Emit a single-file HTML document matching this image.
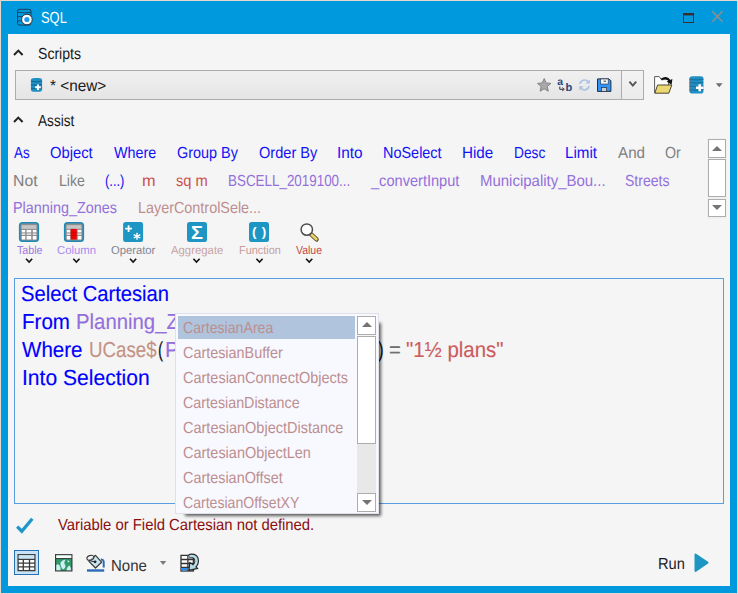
<!DOCTYPE html>
<html><head><meta charset="utf-8"><title>SQL</title>
<style>
html,body{margin:0;padding:0}
body{width:738px;height:594px;overflow:hidden;background:#fff;position:relative;font-family:"Liberation Sans",sans-serif}
.a{position:absolute}
#frame{left:1px;top:1px;width:736px;height:592px;background:#0099dd}
#content{left:8px;top:34px;width:722px;height:552px;background:#f5f5f5}
.t{position:absolute;white-space:pre;transform-origin:0 0;display:block;text-rendering:geometricPrecision}
svg{position:absolute;overflow:visible}
#combo{left:15px;top:70px;width:605px;height:28px;border:1px solid #acacac;background:linear-gradient(#f0f0f0,#e5e5e5)}
#combobtn{left:621px;top:70px;width:21px;height:28px;border:1px solid #acacac;background:linear-gradient(#f3f3f3,#ebebeb)}
.sb{background:#fff;border:1px solid #adadad;box-sizing:border-box}
#editor{left:14px;top:278px;width:708px;height:224px;border:1px solid #5a9de0;background:#f5f5f5}
#popup{left:175px;top:313px;width:204px;height:201px;box-sizing:border-box;border:1px solid #e0e0e8;background:#f8f8ff;box-shadow:6px 6px 3px -4px rgba(0,0,0,.62)}
#sel{left:178px;top:316px;width:177px;height:23px;background:#b0c4de}
#ptrack{left:357px;top:335px;width:19px;height:158px;background:#e8e8e8}
#btn1{left:14px;top:550px;width:23px;height:23px;border:1px solid #2672b4;background:#c9e2f5}
</style></head><body>
<div class="a" style="left:0;top:0;width:738px;height:594px;background:#e6d7cf"></div>
<div class="a" id="frame"></div>
<div class="a" id="content"></div>

<!-- title bar icons -->
<svg id="ic-title" style="left:16px;top:8px" width="18" height="18" viewBox="0 0 18 18"></svg>
<svg id="ic-max" style="left:683px;top:13px" width="12" height="11" viewBox="0 0 12 11"><rect x="0.5" y="1" width="10" height="8.5" fill="none" stroke="#3a2e2c" stroke-width="1"/><rect x="0" y="0" width="11" height="2.4" fill="#3a2e2c"/></svg>
<svg id="ic-close" style="left:712px;top:11px" width="11" height="11" viewBox="0 0 11 11"><path d="M0.3 0.3L10.5 10.7M10.5 0.3L0.3 10.7" stroke="#8e8e8e" stroke-width="1.6" fill="none"/></svg>

<!-- expander chevrons -->
<svg style="left:13px;top:49px" width="11" height="7" viewBox="0 0 11 7"><path d="M1 6L5.3 1.6L9.6 6" fill="none" stroke="#222" stroke-width="2"/></svg>
<svg style="left:13px;top:116px" width="11" height="7" viewBox="0 0 11 7"><path d="M1 6L5.3 1.6L9.6 6" fill="none" stroke="#222" stroke-width="2"/></svg>

<div class="a" id="combo"></div>
<div class="a" id="combobtn"></div>
<svg style="left:629px;top:81px" width="8" height="6" viewBox="0 0 8 6"><path d="M0.4 0.6L3.8 4.6L7.2 0.6" fill="none" stroke="#555" stroke-width="1.9"/></svg>

<!-- assist scrollbar -->
<div class="a" style="left:707px;top:138px;width:20px;height:81px;background:#f0f0f0"></div>
<div class="a sb" style="left:708px;top:139px;width:18px;height:19px"></div>
<div class="a sb" style="left:708px;top:159px;width:18px;height:38px"></div>
<div class="a sb" style="left:708px;top:199px;width:18px;height:18px"></div>
<svg style="left:712px;top:146px" width="10" height="5" viewBox="0 0 10 5"><path d="M0 5L5 0L10 5Z" fill="#747474"/></svg>
<svg style="left:712px;top:205px" width="10" height="5" viewBox="0 0 10 5"><path d="M0 0L5 5L10 0Z" fill="#747474"/></svg>

<!-- editor -->
<div class="a" id="editor"></div>
<span class="t" style="left:21.20px;top:280px;font-size:21.8px;line-height:28px;color:#0000ff;transform:scaleX(0.9257);-webkit-text-stroke:0.15px">Select Cartesian</span>
<span class="t" style="left:22.06px;top:308px;font-size:21.8px;line-height:28px;color:#0000ff;transform:scaleX(0.9426);-webkit-text-stroke:0.15px">From</span>
<span class="t" style="left:75.97px;top:308px;font-size:21.8px;line-height:28px;color:#9370db;transform:scaleX(0.9327);-webkit-text-stroke:0.15px">Planning_Zones</span>
<span class="t" style="left:21.90px;top:336px;font-size:21.8px;line-height:28px;color:#0000ff;transform:scaleX(0.9426);-webkit-text-stroke:0.15px">Where</span>
<span class="t" style="left:88.74px;top:336px;font-size:21.8px;line-height:28px;color:#c49284;transform:scaleX(0.8580);-webkit-text-stroke:0.15px">UCase$</span>
<span class="t" style="left:157.70px;top:336px;font-size:21.8px;line-height:28px;color:#111111;transform:scaleX(0.7000);-webkit-text-stroke:0.15px">(</span>
<span class="t" style="left:165.45px;top:336px;font-size:21.8px;line-height:28px;color:#9370db;transform:scaleX(0.9546);-webkit-text-stroke:0.15px">Planning_Zones.Name</span>
<span class="t" style="left:378.30px;top:336px;font-size:21.8px;line-height:28px;color:#111111;transform:scaleX(0.7833);-webkit-text-stroke:0.15px">)</span>
<span class="t" style="left:388.97px;top:336px;font-size:21.8px;line-height:28px;color:#707070;transform:scaleX(0.9273);-webkit-text-stroke:0.15px">=</span>
<span class="t" style="left:406.20px;top:336px;font-size:21.8px;line-height:28px;color:#cd5c5c;transform:scaleX(0.9389);-webkit-text-stroke:0.15px">&quot;1½ plans&quot;</span>
<span class="t" style="left:21.57px;top:364px;font-size:21.8px;line-height:28px;color:#0000ff;transform:scaleX(0.9662);-webkit-text-stroke:0.15px">Into Selection</span>

<!-- popup -->
<div class="a" id="popup"></div>
<div class="a" id="sel"></div>
<div class="a" id="ptrack"></div>
<div class="a sb" style="left:357px;top:316px;width:19px;height:19px"></div>
<div class="a" style="left:357px;top:335px;width:19px;height:1px;background:#f4f4fa"></div><div class="a sb" style="left:357px;top:336px;width:19px;height:108px"></div>
<div class="a sb" style="left:357px;top:493px;width:19px;height:19px"></div>
<svg style="left:361.5px;top:322px" width="10" height="5" viewBox="0 0 10 5"><path d="M0 5L5 0L10 5Z" fill="#747474"/></svg>
<svg style="left:361.5px;top:500px" width="10" height="5" viewBox="0 0 10 5"><path d="M0 0L5 5L10 0Z" fill="#747474"/></svg>
<span class="t" style="left:183.40px;top:321px;font-size:16px;line-height:16px;color:#bc8f8f;transform:scaleX(0.8830)">CartesianArea</span>
<span class="t" style="left:183.40px;top:346px;font-size:16px;line-height:16px;color:#bc8f8f;transform:scaleX(0.8992)">CartesianBuffer</span>
<span class="t" style="left:183.40px;top:371px;font-size:16px;line-height:16px;color:#bc8f8f;transform:scaleX(0.9050)">CartesianConnectObjects</span>
<span class="t" style="left:183.40px;top:396px;font-size:16px;line-height:16px;color:#bc8f8f;transform:scaleX(0.8920)">CartesianDistance</span>
<span class="t" style="left:183.40px;top:421px;font-size:16px;line-height:16px;color:#bc8f8f;transform:scaleX(0.9064)">CartesianObjectDistance</span>
<span class="t" style="left:183.40px;top:446px;font-size:16px;line-height:16px;color:#bc8f8f;transform:scaleX(0.9045)">CartesianObjectLen</span>
<span class="t" style="left:183.40px;top:471px;font-size:16px;line-height:16px;color:#bc8f8f;transform:scaleX(0.9002)">CartesianOffset</span>
<span class="t" style="left:183.40px;top:496px;font-size:16px;line-height:16px;color:#bc8f8f;transform:scaleX(0.8805)">CartesianOffsetXY</span>

<!-- bottom -->
<div class="a" id="btn1"></div>
<svg style="left:694px;top:553px" width="15" height="20" viewBox="0 0 15 20"><path d="M1.5 1.5L13.5 9.7L1.5 18Z" fill="#1e96c3" stroke="#1e96c3" stroke-width="2" stroke-linejoin="round"/></svg>

<svg id="icons" style="left:0;top:0" width="738" height="594" viewBox="0 0 738 594">
<!-- title icon: db + target -->
<g fill="none" stroke="#1b3f5c" stroke-width="1">
<path d="M17.5 11 Q17.5 9.3 20 9.3 H28.5 Q31 9.3 31 11 V23.4 Q31 25.1 28.5 25.1 H20 Q17.5 25.1 17.5 23.4 Z"/>
<path d="M17.5 12.3 Q24 13.3 31 12.3 M17.5 16.6 H22 M17.5 20.9 H21.5" stroke-opacity="0.85"/>
</g>
<circle cx="26.9" cy="19.5" r="5.3" fill="#fff" stroke="#333" stroke-width="1"/>
<circle cx="26.9" cy="19.5" r="2.6" fill="#1c9cf0"/>

<!-- combo db+ small -->
<g>
<path d="M30.9 80.2 Q30.9 78 34.6 78 H38.4 Q42.1 78 42.1 80.2 V89.4 Q42.1 91.7 38.4 91.7 H34.6 Q30.9 91.7 30.9 89.4 Z" fill="#1f8fc4"/>
<path d="M31 81.2 Q36.5 82.6 42 81.2 M31 84.6 Q36.5 86 42 84.6 M31 88.1 Q36.5 89.5 42 88.1" fill="none" stroke="#15628c" stroke-width="1"/>
<path d="M35.2 87.3 H40.8 M38 84.6 V90" stroke="#fff" stroke-width="1.9" fill="none"/>
</g>

<!-- star -->
<path d="M544.2 78.6 L546.1 82.9 L550.9 83.4 L547.3 86.6 L548.3 91.2 L544.2 88.8 L540.1 91.2 L541.1 86.6 L537.5 83.4 L542.3 82.9 Z" fill="#a9a9a9" stroke="#7d7d7d" stroke-width="0.9" stroke-linejoin="round"/>

<!-- a->b -->
<text x="557.2" y="84.7" style="font-family:&quot;Liberation Sans&quot;,sans-serif" font-weight="bold" font-size="10.4" text-rendering="geometricPrecision" fill="#1c477c">a</text>
<text x="565.4" y="91" style="font-family:&quot;Liberation Sans&quot;,sans-serif" font-weight="bold" font-size="11" text-rendering="geometricPrecision" fill="#1c477c">b</text>
<path d="M559.8 86.5 V89.3 H563.3 M562.2 87.7 L564.3 89.3 L562.2 90.9" fill="none" stroke="#333" stroke-width="1"/>

<!-- refresh -->
<g fill="none" stroke="#a9c3e3" stroke-width="1.7">
<path d="M580 84 A4.6 4.6 0 0 1 588 81.6"/>
<path d="M589 85.8 A4.6 4.6 0 0 1 581 88.3"/>
</g>
<path d="M589.8 79.4 V83.6 H585.6 Z M579.2 90.4 V86.3 H583.4 Z" fill="#a9c3e3"/>

<!-- save -->
<path d="M597.5 78.9 H609 L610.9 80.8 V91.4 H597.5 Z" fill="#3294f6" stroke="#223044" stroke-width="1"/>
<rect x="600.6" y="79" width="7.6" height="5" fill="#f4f4f4" stroke="#223044" stroke-width="0.6"/>
<rect x="603.6" y="80.6" width="2.4" height="1.2" fill="#555"/>
<rect x="601.6" y="87.6" width="5" height="3.9" fill="#d0d0d0" stroke="#223044" stroke-width="0.7"/>

<!-- folder open -->
<path d="M654.6 93 V76.6 H659.2 L661.4 79.6 H668.6 V85" fill="#fff" stroke="#5a5a5a" stroke-width="1"/>
<path d="M657.6 85 H671.8 L668.8 93.2 H654.8 Z" fill="#ecd872" stroke="#4a4636" stroke-width="1" stroke-linejoin="round"/>
<path d="M661.4 79.6 Q666.2 76 669.8 80.8" fill="none" stroke="#111" stroke-width="2.1"/>
<path d="M666.6 81.4 L672.4 79 L671.6 84.8 Z" fill="#111"/>

<!-- db+ big -->
<g>
<path d="M689.6 78.2 Q689.6 76.2 692.4 76.2 H700.6 Q703.4 76.2 703.4 78.2 V91.5 Q703.4 93.5 700.6 93.5 H692.4 Q689.6 93.5 689.6 91.5 Z" fill="#1f8fc4"/>
<path d="M689.6 79.4 Q696.5 80.4 703.4 79.4 M689.6 82.6 Q696.5 83.6 703.4 82.6 M689.6 86.2 Q696.5 87.2 703.4 86.2 M689.6 89.8 Q696.5 90.8 703.4 89.8" fill="none" stroke="#176a96" stroke-width="0.9"/>
<path d="M690 78 V91.6" stroke="#5f7384" stroke-width="1"/>
<path d="M696 87.8 H703.4 M699.7 84.3 V91.3" stroke="#fff" stroke-width="2.5" fill="none"/>
</g>
<path d="M715.8 83.2 H722.6 L719.2 87.2 Z" fill="#6e6e6e"/>

<!-- Table icon -->
<g id="tbl">
<rect x="19.7" y="222.7" width="18.6" height="18.6" rx="2.8" fill="#8e8e8e" stroke="#1e8ab8" stroke-width="1.6"/>
<rect x="21.6" y="225.2" width="14.8" height="3.6" fill="#c6c6c6"/>
<g fill="#fff">
<rect x="21.8" y="229.9" width="3.4" height="2.5"/><rect x="26.6" y="229.9" width="4.6" height="2.5"/><rect x="32.8" y="229.9" width="3.6" height="2.5"/>
<rect x="21.8" y="233.4" width="3.4" height="1.6" fill="#e4e4e4"/><rect x="26.6" y="233.4" width="4.6" height="1.6" fill="#e4e4e4"/><rect x="32.8" y="233.4" width="3.6" height="1.6" fill="#e4e4e4"/>
<rect x="21.8" y="236" width="3.4" height="3.5"/><rect x="26.6" y="236" width="4.6" height="3.5"/><rect x="32.8" y="236" width="3.6" height="3.5"/>
</g></g>
<!-- Column icon -->
<g id="col" transform="translate(45,0)">
<rect x="19.7" y="222.7" width="18.6" height="18.6" rx="2.8" fill="#8e8e8e" stroke="#1e8ab8" stroke-width="1.6"/>
<rect x="21.6" y="225.2" width="14.8" height="3.6" fill="#c6c6c6"/>
<g fill="#fff">
<rect x="21.8" y="229.9" width="3.4" height="2.5"/><rect x="32.8" y="229.9" width="3.6" height="2.5"/>
<rect x="21.8" y="233.4" width="3.4" height="1.6" fill="#e4e4e4"/><rect x="32.8" y="233.4" width="3.6" height="1.6" fill="#e4e4e4"/>
<rect x="21.8" y="236" width="3.4" height="3.5"/><rect x="32.8" y="236" width="3.6" height="3.5"/>
</g>
<rect x="25.7" y="228.9" width="6" height="10.6" fill="#f40000"/>
<path d="M25.7 232.9 H31.7 M25.7 235.5 H31.7" stroke="#c80000" stroke-width="0.8"/>
</g>
<!-- Operator icon -->
<rect x="123.1" y="222.1" width="20" height="20" rx="2.5" fill="#1e96c3"/>
<path d="M125.2 228.6 H132 M128.6 225.2 V232" stroke="#fff" stroke-width="1.8" fill="none"/>
<path d="M137 232.8 V239.8 M133.7 234.6 L140.3 238 M140.3 234.6 L133.7 238" stroke="#fff" stroke-width="1.4" fill="none"/>
<!-- Aggregate icon -->
<rect x="187" y="222.1" width="20" height="20" rx="2.5" fill="#1e96c3"/>
<text x="191" y="239.3" style="font-family:&quot;Liberation Sans&quot;,sans-serif" font-weight="bold" font-size="19" fill="#fff" textLength="12" lengthAdjust="spacingAndGlyphs">Σ</text>
<!-- Function icon -->
<rect x="249" y="222" width="20" height="20" rx="2.5" fill="#1e96c3"/>
<text x="252" y="236.4" style="font-family:&quot;Liberation Sans&quot;,sans-serif" font-size="13.5" font-weight="bold" fill="#fff">(</text>
<text x="261.8" y="236.4" style="font-family:&quot;Liberation Sans&quot;,sans-serif" font-size="13.5" font-weight="bold" fill="#fff">)</text>
<!-- Value icon (magnifier) -->
<path d="M311.2 234.4 L316.6 239.4" stroke="#5a5030" stroke-width="4.4" stroke-linecap="round"/>
<path d="M311.6 234.8 L316.4 239.2" stroke="#ecd468" stroke-width="2.6" stroke-linecap="round"/>
<circle cx="306.8" cy="229.6" r="5.7" fill="#fff" stroke="#4e4e4e" stroke-width="1.5"/>

<!-- small chevrons under labels -->
<g fill="none" stroke="#111" stroke-width="1.6">
<path d="M26 258.8 L29.1 262 L32.2 258.8"/>
<path d="M73.3 258.8 L76.4 262 L79.5 258.8"/>
<path d="M130 258.8 L133.1 262 L136.2 258.8"/>
<path d="M193.4 258.8 L196.5 262 L199.6 258.8"/>
<path d="M256.4 258.8 L259.5 262 L262.6 258.8"/>
<path d="M306.1 258.8 L309.2 262 L312.3 258.8"/>
</g>

<!-- checkmark -->
<path d="M17.2 526.6 L21.8 531.2 L32.3 518.8" fill="none" stroke="#1e96c8" stroke-width="3.3"/>

<!-- bottom: grid icon -->
<rect x="18.1" y="554.7" width="16.8" height="15.9" fill="#fff" stroke="#3a3a3a" stroke-width="1.3"/>
<rect x="18.8" y="555.4" width="15.4" height="3.3" fill="#c5e6f6"/>
<path d="M18 559.3 H35 M18 563.1 H35 M18 566.9 H35 M23.3 559.3 V570.6 M29.5 559.3 V570.6" stroke="#3a3a3a" stroke-width="1.3" fill="none"/>
<!-- map window -->
<rect x="55.6" y="554.7" width="16.3" height="16.2" fill="#2f9a6a" stroke="#3c3c3c" stroke-width="1.2"/>
<rect x="56.2" y="555.3" width="15.1" height="2.7" fill="#fff"/>
<path d="M55.6 558.6 H71.9" stroke="#3c3c3c" stroke-width="1"/>
<path d="M56.3 565 Q58 563.5 59.5 565.5 Q61 567 60.5 570.3 H56.3 Z M60.5 562.5 Q62 560 65.5 559.6 Q64 562 64.5 564 Q66.5 566 64.5 568.5 Q62.5 570.5 61.5 567.5 Q60 565 60.5 562.5 Z M66.5 570.3 Q67 566.5 69.5 565.5 Q70.8 566.5 71.2 570.3 Z M67 561 Q68.5 560 69.5 561.5 Q68.5 563 67 561 Z" fill="#cdeef2"/>
<!-- paint bucket -->
<path d="M87 570.5 H104.2" stroke="#2b6cb5" stroke-width="2.4"/>
<path d="M100.8 559.4 Q103.8 559.4 103.7 562.4 V567.6" stroke="#2b6cb5" stroke-width="2" fill="none"/>
<path d="M88.9 561.4 L95.5 555.3 L101.6 562.2 L95.5 568 Z" fill="#c6e5ee" stroke="#3a3a3a" stroke-width="1.2" stroke-linejoin="round"/>
<ellipse cx="90.4" cy="557.8" rx="3.6" ry="2.3" transform="rotate(-20 90.4 557.8)" fill="#f5f5f5" fill-opacity="0.6" stroke="#3a3a3a" stroke-width="1.1"/>
<path d="M89.4 559.8 Q91 561.6 95.1 561.8" stroke="#3a3a3a" stroke-width="1.1" fill="none"/>
<circle cx="95.1" cy="561.8" r="1.4" fill="#222"/>
<path d="M159.9 561 H166.3 L163.1 564.9 Z" fill="#7a7a7a"/>
<!-- table update icon -->
<rect x="181" y="555.4" width="12.4" height="15.6" fill="#fff" stroke="#333" stroke-width="1.3"/>
<path d="M181 559.5 H193.4 M181 563.5 H193.4 M181 567.4 H193.4 M187.9 555.4 V571" stroke="#333" stroke-width="1.3" fill="none"/>
<rect x="181.7" y="568" width="5.6" height="2.4" fill="#2f8cf0"/>
<path d="M189 556.2 Q197.4 554.6 196.6 562 Q196.3 564.6 194.6 566" fill="none" stroke="#222" stroke-width="4.6"/>
<path d="M189 570.4 L189.8 562.4 L197.8 568.4 Z" fill="#b4dce6" stroke="#222" stroke-width="1.1" stroke-linejoin="round"/>
<path d="M189.4 556.2 Q197.2 554.8 196.5 562 Q196.2 564.6 193.8 566.6" fill="none" stroke="#b4dce6" stroke-width="2.6"/>
</svg>


<span class="t" style="left:40.90px;top:11px;font-size:16px;line-height:16px;color:#ffffff;transform:scaleX(0.8064)">SQL</span>
<span class="t" style="left:38.30px;top:47px;font-size:16px;line-height:16px;color:#1a1a1a;transform:scaleX(0.8794)">Scripts</span>
<span class="t" style="left:50.30px;top:79px;font-size:16px;line-height:16px;color:#1a1a1a;transform:scaleX(0.9594)">* &lt;new&gt;</span>
<span class="t" style="left:38.00px;top:114px;font-size:16px;line-height:16px;color:#1a1a1a;transform:scaleX(0.8513)">Assist</span>
<span class="t" style="left:14.10px;top:146px;font-size:16px;line-height:16px;color:#1212f6;transform:scaleX(0.8355)">As</span>
<span class="t" style="left:50.30px;top:146px;font-size:16px;line-height:16px;color:#1212f6;transform:scaleX(0.9210)">Object</span>
<span class="t" style="left:114.00px;top:146px;font-size:16px;line-height:16px;color:#1212f6;transform:scaleX(0.8978)">Where</span>
<span class="t" style="left:177.40px;top:146px;font-size:16px;line-height:16px;color:#1212f6;transform:scaleX(0.9011)">Group By</span>
<span class="t" style="left:258.60px;top:146px;font-size:16px;line-height:16px;color:#1212f6;transform:scaleX(0.9107)">Order By</span>
<span class="t" style="left:336.64px;top:146px;font-size:16px;line-height:16px;color:#1212f6;transform:scaleX(0.9578)">Into</span>
<span class="t" style="left:383.10px;top:146px;font-size:16px;line-height:16px;color:#1212f6;transform:scaleX(0.9027)">NoSelect</span>
<span class="t" style="left:461.95px;top:146px;font-size:16px;line-height:16px;color:#1212f6;transform:scaleX(0.9498)">Hide</span>
<span class="t" style="left:513.54px;top:146px;font-size:16px;line-height:16px;color:#1212f6;transform:scaleX(0.8575)">Desc</span>
<span class="t" style="left:564.55px;top:146px;font-size:16px;line-height:16px;color:#1212f6;transform:scaleX(0.9479)">Limit</span>
<span class="t" style="left:617.80px;top:146px;font-size:16px;line-height:16px;color:#808080;transform:scaleX(0.9503)">And</span>
<span class="t" style="left:664.60px;top:146px;font-size:16px;line-height:16px;color:#808080;transform:scaleX(0.8891)">Or</span>
<span class="t" style="left:13.41px;top:174px;font-size:16px;line-height:16px;color:#808080;transform:scaleX(0.9856)">Not</span>
<span class="t" style="left:58.62px;top:174px;font-size:16px;line-height:16px;color:#808080;transform:scaleX(0.8822)">Like</span>
<span class="t" style="left:104.79px;top:174px;font-size:16px;line-height:16px;color:#1212f6;transform:scaleX(0.8074)">(...)</span>
<span class="t" style="left:142.48px;top:174px;font-size:16px;line-height:16px;color:#c8524e;transform:scaleX(1.0167)">m</span>
<span class="t" style="left:176.40px;top:174px;font-size:16px;line-height:16px;color:#c8524e;transform:scaleX(0.9172)">sq m</span>
<span class="t" style="left:228.36px;top:174px;font-size:16px;line-height:16px;color:#9370db;transform:scaleX(0.8380)">BSCELL_2019100...</span>
<span class="t" style="left:371.31px;top:174px;font-size:16px;line-height:16px;color:#9370db;transform:scaleX(0.9116)">_convertInput</span>
<span class="t" style="left:480.26px;top:174px;font-size:16px;line-height:16px;color:#9370db;transform:scaleX(0.9352)">Municipality_Bou...</span>
<span class="t" style="left:624.80px;top:174px;font-size:16px;line-height:16px;color:#9370db;transform:scaleX(0.8779)">Streets</span>
<span class="t" style="left:13.20px;top:201px;font-size:16px;line-height:16px;color:#9370db;transform:scaleX(0.8985)">Planning_Zones</span>
<span class="t" style="left:137.50px;top:201px;font-size:16px;line-height:16px;color:#bc8f8f;transform:scaleX(0.8988)">LayerControlSele...</span>
<span class="t" style="left:16.80px;top:244px;font-size:11.6px;line-height:14px;color:#9d78e0;transform:scaleX(0.9205)">Table</span>
<span class="t" style="left:56.80px;top:244px;font-size:11.6px;line-height:14px;color:#a88cf0;transform:scaleX(0.9797)">Column</span>
<span class="t" style="left:111.00px;top:244px;font-size:11.6px;line-height:14px;color:#7f8796;transform:scaleX(0.9675)">Operator</span>
<span class="t" style="left:170.70px;top:244px;font-size:11.6px;line-height:14px;color:#c9a3a3;transform:scaleX(0.9782)">Aggregate</span>
<span class="t" style="left:238.50px;top:244px;font-size:11.6px;line-height:14px;color:#c49c9c;transform:scaleX(0.9428)">Function</span>
<span class="t" style="left:296.30px;top:244px;font-size:11.6px;line-height:14px;color:#c4464c;transform:scaleX(0.9032)">Value</span>
<span class="t" style="left:57.80px;top:518px;font-size:16px;line-height:16px;color:#8a0e0e;transform:scaleX(0.9274)">Variable or Field Cartesian not defined.</span>
<span class="t" style="left:111.46px;top:559px;font-size:16px;line-height:16px;color:#333333;transform:scaleX(0.9370)">None</span>
<span class="t" style="left:658.09px;top:557px;font-size:16px;line-height:16px;color:#1a1a1a;transform:scaleX(0.9143)">Run</span>
</body></html>
